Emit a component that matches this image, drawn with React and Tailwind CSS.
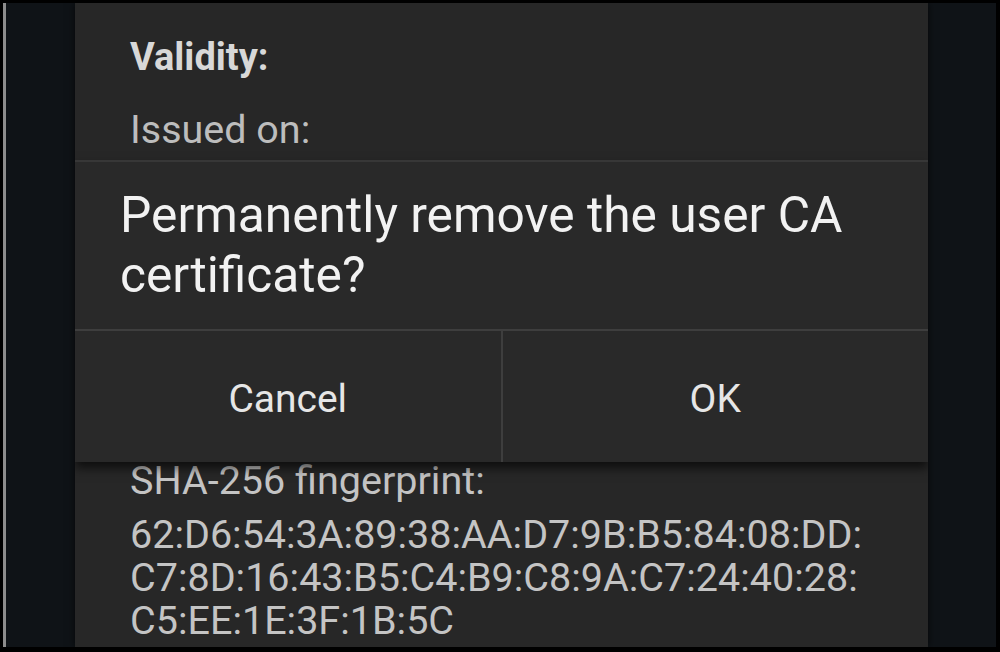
import React from "react";

/**
 * Certificate details screen with the "remove user CA" confirmation dialog on top.
 */
const fingerprint = [
  "62:D6:54:3A:89:38:AA:D7:9B:B5:84:08:DD:",
  "C7:8D:16:43:B5:C4:B9:C8:9A:C7:24:40:28:",
  "C5:EE:1E:3F:1B:5C",
];

const ConfirmDialog = () => (
  <div className="relative z-10 flex flex-col bg-[#292929] border-t-2 border-[#373737] shadow-[0_6px_10px_rgba(0,0,0,0.65)]">
    <div className="h-[167px] pl-[45px] pt-[23px] text-[49.7px] leading-[60px] text-[#f2f2f2]">
      <p>Permanently remove the user CA</p>
      <p>certificate?</p>
    </div>
    <div className="h-[2px] bg-[#3e3e3e]" />
    <div className="flex h-[131px] pt-[6px]">
      <button className="flex-1 text-[39px] text-[#e6e6e6]">Cancel</button>
      <div className="-mt-[6px] w-[2px] bg-[#3e3e3e]" />
      <button className="flex-1 text-[39px] text-[#e6e6e6]">OK</button>
    </div>
  </div>
);

export default function App() {
  return (
    <div className="w-[1000px] h-[652px] bg-black pt-[3px] pb-[5px] pl-[3px] pr-[4px] flex font-[Roboto,sans-serif]">
      <div className="flex-1 flex border-l-[3px] border-[#8c8c8c] bg-[#0f1317] pl-[69px] pr-[68px]">
        <div className="flex-1 flex flex-col bg-[#272727] shadow-[0_0_8px_rgba(0,0,0,0.7)] overflow-hidden">
          {/* details behind the dialog */}
          <div className="h-[157px] pl-[55px] pt-[32px] text-[39.5px] leading-[44px]">
            <p className="text-[38px] font-bold text-[#d8d8d8]">Validity:</p>
            <p className="mt-[29px] text-[#bdbdbd]">Issued on:</p>
          </div>

          <ConfirmDialog />

          <div className="pl-[55px] pt-[3px] text-[39.5px] text-[#c4c4c4]">
            <p className="leading-[32px]">SHA-256 fingerprint:</p>
            <div className="mt-[16px] leading-[43px]">
              {fingerprint.map((line) => (
                <p key={line}>{line}</p>
              ))}
            </div>
          </div>
        </div>
      </div>
    </div>
  );
}
